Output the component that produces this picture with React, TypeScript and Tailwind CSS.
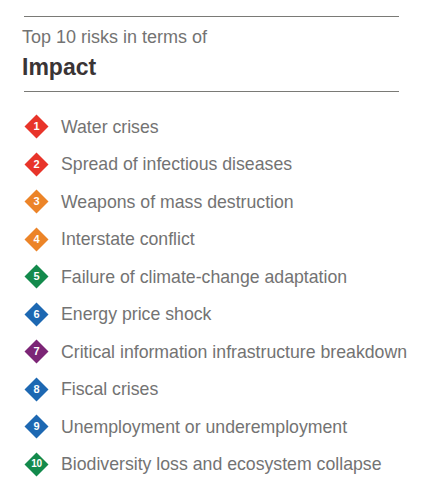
// Top 10 risks in terms of Impact — ranked list with coloured diamond markers

type Risk = {
  rank: number;
  label: string;
  color: string;
};

const risks: Risk[] = [
  { rank: 1, label: 'Water crises', color: 'bg-[#e8342a]' },
  { rank: 2, label: 'Spread of infectious diseases', color: 'bg-[#e8342a]' },
  { rank: 3, label: 'Weapons of mass destruction', color: 'bg-[#ec8428]' },
  { rank: 4, label: 'Interstate conflict', color: 'bg-[#ec8428]' },
  { rank: 5, label: 'Failure of climate-change adaptation', color: 'bg-[#138a4c]' },
  { rank: 6, label: 'Energy price shock', color: 'bg-[#1d68b2]' },
  { rank: 7, label: 'Critical information infrastructure breakdown', color: 'bg-[#7c2576]' },
  { rank: 8, label: 'Fiscal crises', color: 'bg-[#1d68b2]' },
  { rank: 9, label: 'Unemployment or underemployment', color: 'bg-[#1d68b2]' },
  { rank: 10, label: 'Biodiversity loss and ecosystem collapse', color: 'bg-[#138a4c]' },
];

// 23×23 bounding box, square ~17px rotated 45°
function Diamond({ rank, color }: { rank: number; color: string }) {
  return (
    <div className="relative flex h-[23px] w-[23px] shrink-0 items-center justify-center">
      <div className={`absolute h-[17px] w-[17px] rotate-45 ${color}`} />
      <span
        className={`relative font-bold leading-none text-white ${
          rank >= 10 ? 'text-[10px] tracking-[-0.4px]' : 'text-[11px]'
        }`}
      >
        {rank}
      </span>
    </div>
  );
}

export default function App() {
  return (
    <div className="h-[503px] w-[422px] bg-white font-['Liberation_Sans',Arial,sans-serif]">
      <div className="pt-4">
        {/* top rule — x 24→399 */}
        <div className="ml-6 w-[375px] border-t border-[#7a7a76]" />

        {/* header */}
        <div className="mt-[8.5px] pl-[22px]">
          <p className="text-[18px] leading-[22px] text-[#737373]">Top 10 risks in terms of</p>
          <h2 className="mt-[5.5px] text-[23px] font-bold leading-[28px] text-[#3a3435]">Impact</h2>
        </div>

        {/* bottom rule */}
        <div className="ml-6 mt-[10px] w-[375px] border-t border-[#7a7a76]" />

        {/* list — rows 37.5px */}
        <ul className="mt-4 flex flex-col pl-[25px]">
          {risks.map((risk) => (
            <li key={risk.rank} className="flex h-[37.5px] items-center gap-[13px]">
              <Diamond rank={risk.rank} color={risk.color} />
              <span className="whitespace-nowrap text-[17.7px] leading-[20px] text-[#737373]">
                {risk.label}
              </span>
            </li>
          ))}
        </ul>
      </div>
    </div>
  );
}
